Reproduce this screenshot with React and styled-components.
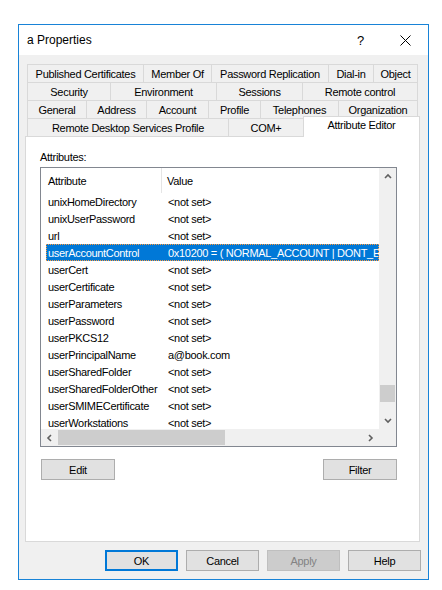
import React from 'react';
import styled, { createGlobalStyle } from 'styled-components';

const Global = createGlobalStyle`
  html, body { margin: 0; padding: 0; background: #ffffff; }
  body {
    font-family: "Liberation Sans", Arial, sans-serif;
    font-size: 11px;
    letter-spacing: -0.3px;
    color: #000;
  }
  * { box-sizing: border-box; }
`;

const Window = styled.div`
  margin: 24px 0 0 18px;
  width: 411px;
  height: 556px;
  border: 1px solid #1883d7;
  background: #f0f0f0;
  display: flex;
  flex-direction: column;
`;

const TitleBar = styled.div`
  height: 30px;
  background: #ffffff;
  display: flex;
  align-items: center;
  padding-left: 8px;
`;

const Title = styled.div`
  font-size: 12px;
  letter-spacing: 0;
  flex: 1;
`;

const CaptionButton = styled.div`
  width: 45px;
  height: 30px;
  display: flex;
  align-items: center;
  justify-content: center;
  font-size: 13px;
  letter-spacing: 0;
`;

const Body = styled.div`
  flex: 1;
  padding: 9px 8px 0 6px;
  display: flex;
  flex-direction: column;
`;

const TabStrip = styled.div`
  margin-left: 2px;
  width: 391px;
  display: flex;
  flex-direction: column;
`;

const TabRow = styled.div`
  display: flex;
  height: 18px;
  overflow: visible;
`;

const Tab = styled.div`
  width: ${p => p.$w}px;
  height: 18px;
  flex: none;
  background: #f0f0f0;
  border-top: 1px solid #d9d9d9;
  border-right: 1px solid #d9d9d9;
  &:first-child { border-left: 1px solid #d9d9d9; }
  display: flex;
  align-items: center;
  justify-content: center;
  white-space: nowrap;
  padding-top: 1px;
`;

const ActiveTab = styled.div`
  width: ${p => p.$w}px;
  height: 21px;
  flex: none;
  margin-top: -2px;
  margin-left: -1px;
  position: relative;
  z-index: 1;
  background: #ffffff;
  border: 1px solid #d9d9d9;
  border-bottom: none;
  display: flex;
  align-items: flex-start;
  justify-content: center;
  padding-top: 2px;
  white-space: nowrap;
`;

const Panel = styled.div`
  width: 395px;
  height: 406px;
  background: #ffffff;
  border: 1px solid #d9d9d9;
  padding: 13px 0 0 14px;
  display: flex;
  flex-direction: column;
`;

const FieldLabel = styled.div`
  height: 17px;
  line-height: 15px;
`;

const ListBox = styled.div`
  width: 357px;
  height: 280px;
  border: 1px solid #828790;
  display: grid;
  grid-template-columns: 338px 17px;
  grid-template-rows: 261px 17px;
`;

const ListArea = styled.div`
  overflow: hidden;
  display: flex;
  flex-direction: column;
`;

const Header = styled.div`
  height: 25px;
  flex: none;
  display: flex;
  align-items: center;
`;

const HeaderCell = styled.div`
  width: ${p => (p.$w ? `${p.$w}px` : 'auto')};
  flex: ${p => (p.$w ? 'none' : '1')};
  height: 25px;
  display: flex;
  align-items: center;
  padding-left: ${p => p.$pl}px;
  border-right: ${p => (p.$divider ? '1px solid #e5e5e5' : 'none')};
`;

const Rows = styled.div`
  padding-left: 5px;
  display: flex;
  flex-direction: column;
`;

const Row = styled.div`
  height: 17px;
  flex: none;
  width: 333px;
  display: flex;
  align-items: center;
  white-space: nowrap;
  overflow: hidden;
  background: ${p => (p.$sel ? '#0078d7' : 'transparent')};
  color: ${p => (p.$sel ? '#ffffff' : '#000000')};
  outline: ${p => (p.$sel ? '1px dotted #ff9a3c' : 'none')};
  outline-offset: -1px;
`;

const AttrCell = styled.div`
  width: 122px;
  flex: none;
  padding-left: 2px;
`;

const ValueCell = styled.div`
  flex: 1;
  overflow: hidden;
`;

const VScroll = styled.div`
  background: #f0f0f0;
  display: flex;
  flex-direction: column;
`;

const ScrollButton = styled.div`
  width: 17px;
  height: 17px;
  flex: none;
  display: flex;
  align-items: center;
  justify-content: center;
`;

const VTrack = styled.div`
  flex: 1;
  display: flex;
  flex-direction: column;
  padding: 0 1px;
`;

const VThumb = styled.div`
  margin-top: ${p => p.$top}px;
  height: ${p => p.$h}px;
  background: #cdcdcd;
`;

const HScroll = styled.div`
  background: #f0f0f0;
  display: flex;
  align-items: stretch;
`;

const HTrack = styled.div`
  flex: 1;
  display: flex;
  padding: 1px 0;
`;

const HThumb = styled.div`
  width: ${p => p.$w}px;
  background: #cdcdcd;
`;

const Corner = styled.div`
  background: #f0f0f0;
`;

const ActionRow = styled.div`
  width: 357px;
  margin-top: 12px;
  padding-left: 1px;
  display: flex;
  justify-content: space-between;
`;

const Button = styled.div`
  width: ${p => p.$w}px;
  height: 21px;
  background: ${p => (p.$disabled ? '#cccccc' : '#e1e1e1')};
  border: ${p =>
    p.$default ? '2px solid #0078d7' : p.$disabled ? '1px solid #bfbfbf' : '1px solid #adadad'};
  color: ${p => (p.$disabled ? '#838383' : '#000000')};
  display: flex;
  align-items: center;
  justify-content: center;
`;

const DialogButtons = styled.div`
  margin-top: 8px;
  margin-right: -1px;
  display: flex;
  justify-content: flex-end;
  gap: 8px;
`;

const Chevron = ({ dir }) => {
  const pts = {
    up: '1,5 4,2 7,5',
    down: '1,2 4,5 7,2',
    left: '5,1 2,4 5,7',
    right: '2,1 5,4 2,7',
  }[dir];
  return (
    <svg width="8" height="8" viewBox="0 0 8 8">
      <polyline points={pts} fill="none" stroke="#606060" strokeWidth="1.6" />
    </svg>
  );
};

const CloseIcon = () => (
  <svg width="11" height="11" viewBox="0 0 11 11">
    <path d="M0.5 0.5 L10.5 10.5 M10.5 0.5 L0.5 10.5" stroke="#000" strokeWidth="1" />
  </svg>
);

const tabRows = [
  [['Published Certificates', 117], ['Member Of', 68], ['Password Replication', 117], ['Dial-in', 45], ['Object', 44]],
  [['Security', 84], ['Environment', 106], ['Sessions', 86], ['Remote control', 115]],
  [['General', 60], ['Address', 60], ['Account', 62], ['Profile', 52], ['Telephones', 78], ['Organization', 79]],
];

const rows = [
  ['unixHomeDirectory', '<not set>'],
  ['unixUserPassword', '<not set>'],
  ['url', '<not set>'],
  ['userAccountControl', '0x10200 = ( NORMAL_ACCOUNT | DONT_EXPIRE_PASSWD )', true],
  ['userCert', '<not set>'],
  ['userCertificate', '<not set>'],
  ['userParameters', '<not set>'],
  ['userPassword', '<not set>'],
  ['userPKCS12', '<not set>'],
  ['userPrincipalName', 'a@book.com'],
  ['userSharedFolder', '<not set>'],
  ['userSharedFolderOther', '<not set>'],
  ['userSMIMECertificate', '<not set>'],
  ['userWorkstations', '<not set>'],
];

export default function App() {
  return (
    <>
      <Global />
      <Window>
        <TitleBar>
          <Title>a Properties</Title>
          <CaptionButton>?</CaptionButton>
          <CaptionButton><CloseIcon /></CaptionButton>
        </TitleBar>
        <Body>
          <TabStrip>
            {tabRows.map((r, i) => (
              <TabRow key={i}>
                {r.map(([label, w]) => (
                  <Tab key={label} $w={w}>{label}</Tab>
                ))}
              </TabRow>
            ))}
            <TabRow>
              <Tab $w={202}>Remote Desktop Services Profile</Tab>
              <Tab $w={75}>COM+</Tab>
              <ActiveTab $w={117}>Attribute Editor</ActiveTab>
            </TabRow>
          </TabStrip>
          <Panel>
            <FieldLabel>Attributes:</FieldLabel>
            <ListBox>
              <ListArea>
                <Header>
                  <HeaderCell $w={121} $pl={7} $divider>Attribute</HeaderCell>
                  <HeaderCell $pl={5}>Value</HeaderCell>
                </Header>
                <Rows>
                  {rows.map(([a, v, sel]) => (
                    <Row key={a} $sel={sel}>
                      <AttrCell>{a}</AttrCell>
                      <ValueCell>{v}</ValueCell>
                    </Row>
                  ))}
                </Rows>
              </ListArea>
              <VScroll>
                <ScrollButton><Chevron dir="up" /></ScrollButton>
                <VTrack>
                  <VThumb $top={200} $h={17} />
                </VTrack>
                <ScrollButton><Chevron dir="down" /></ScrollButton>
              </VScroll>
              <HScroll>
                <ScrollButton><Chevron dir="left" /></ScrollButton>
                <HTrack>
                  <HThumb $w={167} />
                </HTrack>
                <ScrollButton><Chevron dir="right" /></ScrollButton>
              </HScroll>
              <Corner />
            </ListBox>
            <ActionRow>
              <Button $w={74}>Edit</Button>
              <Button $w={74}>Filter</Button>
            </ActionRow>
          </Panel>
          <DialogButtons>
            <Button $w={73} $default>OK</Button>
            <Button $w={73}>Cancel</Button>
            <Button $w={73} $disabled>Apply</Button>
            <Button $w={73}>Help</Button>
          </DialogButtons>
        </Body>
      </Window>
    </>
  );
}
